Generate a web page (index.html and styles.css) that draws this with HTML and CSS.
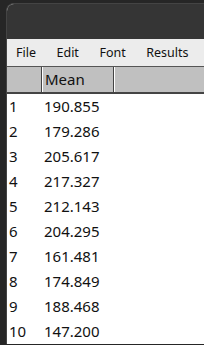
FILE: index.html
```html
<!DOCTYPE html>
<html lang="en">
  <head>
    <meta charset="UTF-8" />
    <meta name="viewport" content="width=device-width, initial-scale=1.0" />
    <title>Results</title>
    <link rel="stylesheet" href="styles.css">
  </head>
  <body>
    <div class="window">
      <div class="titlebar"></div>
      <div class="menubar">
        <span>File</span>
        <span>Edit</span>
        <span>Font</span>
        <span>Results</span>
      </div>

      <div class="grid">
        <div class="head idx"></div>
        <div class="head val">Mean</div>
        <div class="head rest"></div>

        <div class="idx">1</div><div class="val">190.855</div><div></div>
        <div class="idx">2</div><div class="val">179.286</div><div></div>
        <div class="idx">3</div><div class="val">205.617</div><div></div>
        <div class="idx">4</div><div class="val">217.327</div><div></div>
        <div class="idx">5</div><div class="val">212.143</div><div></div>
        <div class="idx">6</div><div class="val">204.295</div><div></div>
        <div class="idx">7</div><div class="val">161.481</div><div></div>
        <div class="idx">8</div><div class="val">174.849</div><div></div>
        <div class="idx">9</div><div class="val">188.468</div><div></div>
        <div class="idx">10</div><div class="val">147.200</div><div></div>
      </div>
    </div>
  </body>
</html>
```

FILE: styles.css
```css
body {
  margin: 0;
  padding: 3px 0 0 6px;
  background-color: #262626;
  font-family: "Noto Sans", "Open Sans", sans-serif;
  color: #111;
  overflow: hidden;
}
.window {
  border-top: 1px solid #444;
  border-left: 1px solid #444;
  border-radius: 8px 0 0 0;
  background-color: #fff;
  overflow: hidden;
}
.titlebar {
  height: 35px;
  background-color: #353535;
}
.menubar {
  height: 27px;
  display: flex;
  align-items: center;
  gap: 20.5px;
  padding-left: 9px;
  background-color: #ececec;
  font-size: 12.5px;
  border-bottom: 1px solid #555;
}
.grid {
  display: grid;
  grid-template-columns: 35px 72px 1fr;
  grid-template-rows: 27px;
  grid-auto-rows: 25px;
  font-size: 15px;
  line-height: 25px;
}
.head {
  box-sizing: border-box;
  background-color: #c0c0c0;
  border-bottom: 2px solid #444;
}
.head.idx,
.head.val {
  border-right: 1px solid #444;
}
.head.val,
.head.rest {
  box-shadow: inset 1px 0 0 #fff;
}
.idx {
  padding-left: 2px;
}
.val {
  padding-left: 2px;
}
.head.val {
  padding-left: 3px;
}
```
